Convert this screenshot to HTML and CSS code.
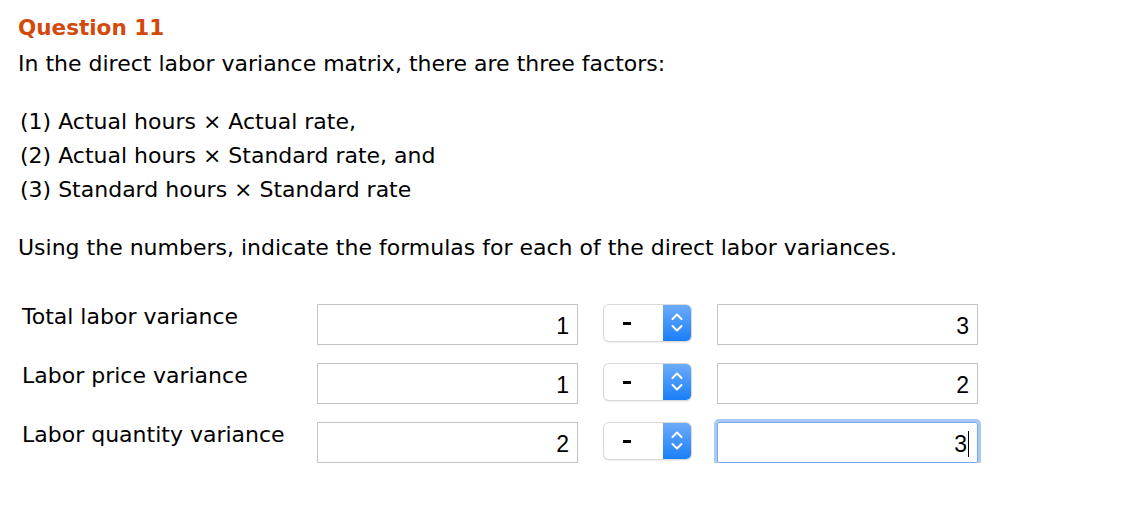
FILE: index.html
```html
<!DOCTYPE html>
<html>
<head>
<meta charset="utf-8">
<link rel="stylesheet" href="styles.css">
</head>
<body>
<div class="page">
  <h2 class="title">Question 11</h2>
  <p class="intro">In the direct labor variance matrix, there are three factors:</p>
  <ul class="factors">
    <li>(1) Actual hours × Actual rate,</li>
    <li>(2) Actual hours × Standard rate, and</li>
    <li>(3) Standard hours × Standard rate</li>
  </ul>
  <p class="instr">Using the numbers, indicate the formulas for each of the direct labor variances.</p>
  <div class="form">
    <div class="row">
      <div class="label">Total labor variance</div>
      <div class="field">1</div>
      <div class="select"><span class="val"><span class="dash"></span></span><span class="stepper"><svg width="14" height="24" viewBox="0 0 14 24"><path d="M2.5 8 L7 3.5 L11.5 8 M2.5 15 L7 19.5 L11.5 15" fill="none" stroke="#fff" stroke-width="2" stroke-linecap="round" stroke-linejoin="round"/></svg></span></div>
      <div class="field">3</div>
    </div>
    <div class="row">
      <div class="label">Labor price variance</div>
      <div class="field">1</div>
      <div class="select"><span class="val"><span class="dash"></span></span><span class="stepper"><svg width="14" height="24" viewBox="0 0 14 24"><path d="M2.5 8 L7 3.5 L11.5 8 M2.5 15 L7 19.5 L11.5 15" fill="none" stroke="#fff" stroke-width="2" stroke-linecap="round" stroke-linejoin="round"/></svg></span></div>
      <div class="field">2</div>
    </div>
    <div class="row">
      <div class="label">Labor quantity variance</div>
      <div class="field">2</div>
      <div class="select"><span class="val"><span class="dash"></span></span><span class="stepper"><svg width="14" height="24" viewBox="0 0 14 24"><path d="M2.5 8 L7 3.5 L11.5 8 M2.5 15 L7 19.5 L11.5 15" fill="none" stroke="#fff" stroke-width="2" stroke-linecap="round" stroke-linejoin="round"/></svg></span></div>
      <div class="field focus">3<span class="caret"></span></div>
    </div>
  </div>
</div>
</body>
</html>
```

FILE: styles.css
```css
html, body {
  margin: 0;
  padding: 0;
  background: #fff;
}
.page {
  padding: 13px 0 0 18px;
  font-family: "DejaVu Sans", Verdana, sans-serif;
  font-size: 22px;
  color: #000;
}
.title {
  margin: 0;
  font-size: 21.5px;
  font-weight: bold;
  color: #d2490b;
  line-height: 30px;
}
.intro {
  margin: 6px 0 0 0;
  line-height: 30px;
}
.factors {
  list-style: none;
  margin: 26px 0 0 2px;
  padding: 0;
}
.factors li {
  line-height: 34px;
}
.instr {
  margin: 26px 0 0 0;
  line-height: 30px;
}
.form {
  margin-top: 41px;
  display: flex;
  flex-direction: column;
  gap: 18px;
}
.row {
  display: flex;
  align-items: flex-start;
  height: 41px;
}
.label {
  width: 295px;
  padding-left: 4px;
  line-height: 26px;
}
.field {
  box-sizing: border-box;
  width: 261px;
  height: 41px;
  border: 1px solid #c4c4c4;
  font-family: "Liberation Sans", Arial, sans-serif;
  font-size: 23px;
  text-align: right;
  padding: 8px 8px 0 0;
  line-height: 26px;
  position: relative;
}
.select {
  box-sizing: border-box;
  margin: 1px 26px 0 26px;
  width: 87px;
  height: 36px;
  border-radius: 5px;
  background: #fff;
  box-shadow: 0 0 0 1px #d9d9d9, 0 1px 2px rgba(0,0,0,0.22);
  display: flex;
  overflow: hidden;
}
.select .val {
  flex: 1;
  display: flex;
  align-items: center;
  padding-left: 19px;
}
.dash {
  display: block;
  width: 8px;
  height: 2.5px;
  background: #000;
  margin-top: 1px;
}
.stepper {
  width: 28px;
  background: linear-gradient(#6cabf9, #1a7ff8);
  display: flex;
  align-items: center;
  justify-content: center;
}
.field.focus {
  border: 1px solid #79a6e8;
  box-shadow: 0 0 0 3px #a9caf6;
  border-radius: 2px;
}
.caret {
  display: inline-block;
  width: 1px;
  height: 26px;
  background: #000;
  vertical-align: top;
  margin-left: 1px;
}
```
